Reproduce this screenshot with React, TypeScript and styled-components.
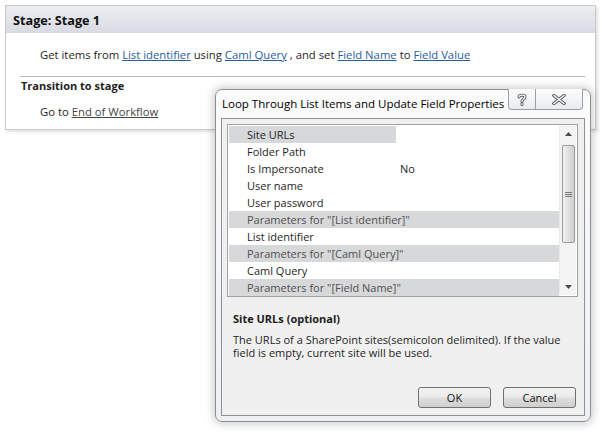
import React from "react";
import styled, { createGlobalStyle } from "styled-components";

const Global = createGlobalStyle`
  html, body { margin: 0; padding: 0; background: #ffffff; }
  body { font-family: "Open Sans", "Noto Sans", sans-serif; color: #1e1e1e; }
`;

const Page = styled.div`
  position: relative;
  width: 602px;
  height: 433px;
  overflow: hidden;
  padding: 5px 0 0 5px;
  box-sizing: border-box;
`;

const StagePanel = styled.section`
  width: 591px;
  height: 125px;
  box-sizing: border-box;
  border: 1px solid #c9c9c9;
  background: #fff;
  box-shadow: 2px 2px 3px rgba(0, 0, 0, 0.12);
  display: flex;
  flex-direction: column;
`;

const StageHeader = styled.header`
  height: 27px;
  flex: none;
  display: flex;
  align-items: center;
  padding-left: 7px;
  background: linear-gradient(#eceef2, #d8dbe2);
  font-size: 12.7px;
  font-weight: 700;
  color: #111;
`;

const StageBody = styled.div`
  padding: 13px 10px 0 14px;
  font-size: 11.3px;
  display: flex;
  flex-direction: column;
`;

const Line = styled.div<{ $indent?: number; $top?: number }>`
  padding-left: ${(p) => p.$indent ?? 0}px;
  margin-top: ${(p) => p.$top ?? 0}px;
  line-height: 17px;
  white-space: nowrap;
`;

const Sep = styled.hr`
  border: 0;
  border-top: 1px solid #b9b9b9;
  margin: 13px 0 0 0;
`;

const SectionTitle = styled.div`
  font-weight: 700;
  font-size: 11px;
  padding-left: 1px;
  line-height: 17px;
`;

const Link = styled.a<{ $muted?: boolean }>`
  color: ${(p) => (p.$muted ? "#444" : "#2a5c9c")};
  text-decoration: underline;
  cursor: pointer;
`;

const Dialog = styled.div`
  position: absolute;
  left: 215px;
  top: 89px;
  width: 376px;
  height: 333px;
  box-sizing: border-box;
  border: 1px solid #8e8f91;
  border-radius: 7px;
  background: linear-gradient(#fbfbfb, #eef0f2);
  box-shadow: 0 0 8px 2px rgba(0, 0, 0, 0.2);
  display: flex;
  flex-direction: column;
  padding: 0 5px 5px 5px;
`;

const TitleBar = styled.div`
  height: 28px;
  flex: none;
  display: flex;
  align-items: flex-start;
  justify-content: space-between;
`;

const TitleText = styled.div`
  font-size: 11.5px;
  padding: 6px 0 0 1px;
  color: #000;
  white-space: nowrap;
`;

const CaptionButtons = styled.div`
  display: flex;
  flex: none;
  margin-top: -1px;
  margin-right: 2px;
`;

const CaptionButton = styled.div<{ $w: number; $first?: boolean }>`
  width: ${(p) => p.$w}px;
  height: 21px;
  box-sizing: border-box;
  border: 1px solid #9a9ea4;
  border-top: 0;
  ${(p) => (p.$first ? "border-right: 0; border-bottom-left-radius: 4px;" : "border-bottom-right-radius: 4px;")}
  background: linear-gradient(#fdfdfd, #e9ebee);
  display: flex;
  align-items: center;
  justify-content: center;
`;

const Client = styled.div`
  flex: 1;
  border: 1px solid #8e9095;
  background: #f0f0f0;
  padding: 5px 6px 0 5px;
  display: flex;
  flex-direction: column;
`;

const Grid = styled.div`
  height: 173px;
  flex: none;
  box-sizing: border-box;
  border: 1px solid #a0a0a0;
  background: #fff;
  display: flex;
  padding: 1px;
`;

const Rows = styled.div`
  flex: 1;
  display: flex;
  flex-direction: column;
  font-size: 11px;
`;

const Row = styled.div<{ $category?: boolean }>`
  height: 17px;
  flex: none;
  display: flex;
  align-items: center;
  background: ${(p) => (p.$category ? "#d7d8da" : "transparent")};
  color: ${(p) => (p.$category ? "#505050" : "#1e1e1e")};
  white-space: nowrap;
`;

const NameCell = styled.div<{ $selected?: boolean; $wide?: boolean }>`
  width: ${(p) => (p.$wide ? "auto" : "167px")};
  flex: none;
  height: 100%;
  display: flex;
  align-items: center;
  padding-left: 18px;
  box-sizing: border-box;
  background: ${(p) => (p.$selected ? "#d7d8da" : "transparent")};
`;

const ValueCell = styled.div`
  padding-left: 4px;
`;

const Scrollbar = styled.div`
  width: 16px;
  flex: none;
  background: #f3f3f3;
  border-left: 1px solid #e8e8e8;
  display: flex;
  flex-direction: column;
  align-items: center;
`;

const Arrow = styled.div`
  height: 16px;
  width: 100%;
  display: flex;
  align-items: center;
  justify-content: center;
`;

const Thumb = styled.div`
  margin-top: 3px;
  width: 13px;
  height: 98px;
  box-sizing: border-box;
  border: 1px solid #9b9b9b;
  border-radius: 2px;
  background: linear-gradient(90deg, #f2f2f2, #dcdcdc 60%, #cfcfcf);
  display: flex;
  align-items: center;
  justify-content: center;
`;

const Track = styled.div`
  flex: 1;
`;

const DescTitle = styled.div`
  margin-top: 14px;
  padding-left: 6px;
  font-size: 11px;
  font-weight: 700;
  color: #1e1e1e;
`;

const DescText = styled.div`
  margin-top: 7px;
  padding-left: 6px;
  width: 340px;
  font-size: 11px;
  line-height: 13px;
  color: #1e1e1e;
`;

const Buttons = styled.div`
  margin-top: auto;
  margin-bottom: 7px;
  display: flex;
  justify-content: flex-end;
  gap: 12px;
  padding-right: 2px;
`;

const Button = styled.button`
  width: 73px;
  height: 21px;
  border: 1px solid #707070;
  border-radius: 3px;
  background: linear-gradient(#f2f2f2 0%, #ebebeb 48%, #dddddd 52%, #cfcfcf 100%);
  font-family: inherit;
  font-size: 11px;
  color: #111;
  padding: 0;
`;

const rows: { name: string; value?: string; category?: boolean; selected?: boolean }[] = [
  { name: "Site URLs", selected: true },
  { name: "Folder Path" },
  { name: "Is Impersonate", value: "No" },
  { name: "User name" },
  { name: "User password" },
  { name: 'Parameters for "[List identifier]"', category: true },
  { name: "List identifier" },
  { name: 'Parameters for "[Caml Query]"', category: true },
  { name: "Caml Query" },
  { name: 'Parameters for "[Field Name]"', category: true },
];

const HelpGlyph = () => (
  <svg width="10" height="13" viewBox="0 0 10 13">
    <path d="M2 4 C2 1.5 8 1.5 8 4 C8 6 5 6 5 8.5 M5 10.5 L5 11.5" fill="none" stroke="#5c6168" strokeWidth="3" strokeLinecap="round" />
    <path d="M2 4 C2 1.5 8 1.5 8 4 C8 6 5 6 5 8.5 M5 10.5 L5 11.5" fill="none" stroke="#fbfbfb" strokeWidth="1.2" strokeLinecap="round" />
  </svg>
);

const CloseGlyph = () => (
  <svg width="14" height="11" viewBox="0 0 14 11">
    <path d="M2 1.5 L12 9.5 M12 1.5 L2 9.5" fill="none" stroke="#5c6168" strokeWidth="3.4" strokeLinecap="square" />
    <path d="M2 1.5 L12 9.5 M12 1.5 L2 9.5" fill="none" stroke="#fbfbfb" strokeWidth="1.4" strokeLinecap="square" />
  </svg>
);

const UpArrow = () => (
  <svg width="7" height="4" viewBox="0 0 7 4"><path d="M0 4 L3.5 0 L7 4 Z" fill="#4a4a4a" /></svg>
);
const DownArrow = () => (
  <svg width="7" height="4" viewBox="0 0 7 4"><path d="M0 0 L3.5 4 L7 0 Z" fill="#4a4a4a" /></svg>
);
const Grip = () => (
  <svg width="7" height="7" viewBox="0 0 7 7">
    <path d="M0 1.5 H7 M0 3.5 H7 M0 5.5 H7" stroke="#777" strokeWidth="1" />
  </svg>
);

export default function App() {
  return (
    <>
      <Global />
      <Page>
        <StagePanel>
          <StageHeader>Stage: Stage 1</StageHeader>
          <StageBody>
            <Line $indent={20}>
              Get items from <Link>List identifier</Link> using <Link>Caml Query</Link> , and set{" "}
              <Link>Field Name</Link> to <Link>Field Value</Link>
            </Line>
            <Sep />
            <SectionTitle>Transition to stage</SectionTitle>
            <Line $indent={20} $top={9}>
              Go to <Link $muted>End of Workflow</Link>
            </Line>
          </StageBody>
        </StagePanel>

        <Dialog>
          <TitleBar>
            <TitleText>Loop Through List Items and Update Field Properties</TitleText>
            <CaptionButtons>
              <CaptionButton $w={27} $first>
                <HelpGlyph />
              </CaptionButton>
              <CaptionButton $w={48}>
                <CloseGlyph />
              </CaptionButton>
            </CaptionButtons>
          </TitleBar>
          <Client>
            <Grid>
              <Rows>
                {rows.map((r) => (
                  <Row key={r.name} $category={r.category}>
                    {r.category ? (
                      <NameCell $wide>{r.name}</NameCell>
                    ) : (
                      <>
                        <NameCell $selected={r.selected}>{r.name}</NameCell>
                        <ValueCell>{r.value}</ValueCell>
                      </>
                    )}
                  </Row>
                ))}
              </Rows>
              <Scrollbar>
                <Arrow><UpArrow /></Arrow>
                <Thumb><Grip /></Thumb>
                <Track />
                <Arrow><DownArrow /></Arrow>
              </Scrollbar>
            </Grid>
            <DescTitle>Site URLs (optional)</DescTitle>
            <DescText>
              The URLs of a SharePoint sites(semicolon delimited). If the value field is empty, current site will be used.
            </DescText>
            <Buttons>
              <Button>OK</Button>
              <Button>Cancel</Button>
            </Buttons>
          </Client>
        </Dialog>
      </Page>
    </>
  );
}
